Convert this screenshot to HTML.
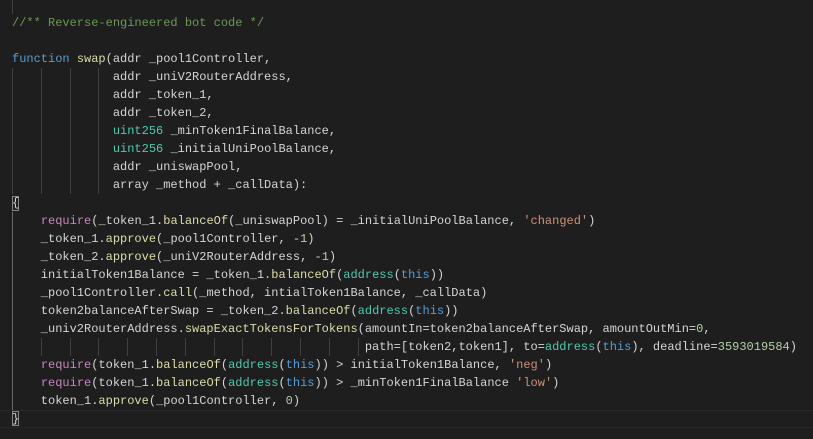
<!DOCTYPE html>
<html><head><style>
html,body{margin:0;padding:0;background:#1e1e1e;width:813px;height:439px;overflow:hidden}
#ed{position:relative;width:813px;height:439px;font-family:"Liberation Mono",monospace;font-size:12px;color:#d4d4d4}
.l{position:absolute;left:12px;height:18px;line-height:18px;white-space:pre}
.g{position:absolute;width:1px;height:18px;background:#404040}
.c{color:#6a9955}.k{color:#569cd6}.f{color:#dcdcaa}.p{color:#c586c0}.s{color:#ce9178}.n{color:#b5cea8}.t{color:#4ec9b0}
.cur{position:absolute;left:0;width:813px;top:410px;height:16px;border-top:1px solid #282828;border-bottom:1px solid #282828}
.bb{position:absolute;width:7px;height:15px;border:1px solid #888;box-sizing:border-box}
</style></head><body><div id="ed">
<div class="cur"></div>
<div class="bb" style="left:12px;top:196px"></div>
<div class="bb" style="left:12px;top:411px"></div>
<div id="gs"></div>
<div class="l" style="top:14px"><span class="c">//** Reverse-engineered bot code */</span></div>
<div class="l" style="top:50px"><span class="k">function</span> <span class="f">swap</span>(addr _pool1Controller,</div>
<div class="l" style="top:68px">              addr _uniV2RouterAddress,</div>
<div class="l" style="top:86px">              addr _token_1,</div>
<div class="l" style="top:104px">              addr _token_2,</div>
<div class="l" style="top:122px">              <span class="t">uint256</span> _minToken1FinalBalance,</div>
<div class="l" style="top:140px">              <span class="t">uint256</span> _initialUniPoolBalance,</div>
<div class="l" style="top:158px">              addr _uniswapPool,</div>
<div class="l" style="top:176px">              array _method + _callData):</div>
<div class="l" style="top:194px">{</div>
<div class="l" style="top:212px">    <span class="p">require</span>(_token_1.<span class="f">balanceOf</span>(_uniswapPool) = _initialUniPoolBalance, <span class="s">'changed'</span>)</div>
<div class="l" style="top:230px">    _token_1.<span class="f">approve</span>(_pool1Controller, -<span class="n">1</span>)</div>
<div class="l" style="top:248px">    _token_2.<span class="f">approve</span>(_uniV2RouterAddress, -<span class="n">1</span>)</div>
<div class="l" style="top:266px">    initialToken1Balance = _token_1.<span class="f">balanceOf</span>(<span class="t">address</span>(<span class="k">this</span>))</div>
<div class="l" style="top:284px">    _pool1Controller.<span class="f">call</span>(_method, intialToken1Balance, _callData)</div>
<div class="l" style="top:302px">    token2balanceAfterSwap = _token_2.<span class="f">balanceOf</span>(<span class="t">address</span>(<span class="k">this</span>))</div>
<div class="l" style="top:320px">    _univ2RouterAddress.<span class="f">swapExactTokensForTokens</span>(amountIn=token2balanceAfterSwap, amountOutMin=<span class="n">0</span>,</div>
<div class="l" style="top:338px">                                                 path=[token2,token1], to=<span class="t">address</span>(<span class="k">this</span>), deadline=<span class="n">3593019584</span>)</div>
<div class="l" style="top:356px">    <span class="p">require</span>(token_1.<span class="f">balanceOf</span>(<span class="t">address</span>(<span class="k">this</span>)) &gt; initialToken1Balance, <span class="s">'neg'</span>)</div>
<div class="l" style="top:374px">    <span class="p">require</span>(token_1.<span class="f">balanceOf</span>(<span class="t">address</span>(<span class="k">this</span>)) &gt; _minToken1FinalBalance <span class="s">'low'</span>)</div>
<div class="l" style="top:392px">    token_1.<span class="f">approve</span>(_pool1Controller, <span class="n">0</span>)</div>
<div class="l" style="top:410px">}</div>
</div>
<script>
var gs=document.getElementById('gs'),h='';
function g(col,top,c){h+='<div class="g" style="left:'+(12+col*7.2).toFixed(1)+'px;top:'+top+'px'+(c?';background:'+c:'')+'"></div>';}
g(0,-4);
for(var t=68;t<=176;t+=18){for(var c=0;c<=12;c+=4)g(c,t);}
for(var t=212;t<=392;t+=18)g(0,t,'#6a6a6a');
for(var c=4;c<=48;c+=4)g(c,338);
gs.innerHTML=h;
</script>
</body></html>
